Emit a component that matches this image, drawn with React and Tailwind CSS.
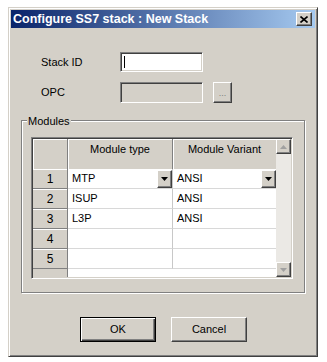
import React from 'react';

const raised =
  'border border-t-white border-l-white border-r-[#404040] border-b-[#404040] shadow-[inset_-1px_-1px_0_#808080,inset_1px_1px_0_#d4d0c8]';
const sunken =
  'border border-t-[#808080] border-l-[#808080] border-r-white border-b-white shadow-[inset_1px_1px_0_#404040,inset_-1px_-1px_0_#d4d0c8]';

const Arrow = ({ dir = 'down', color = '#000' }) => (
  <svg width="7" height="4" viewBox="0 0 7 4">
    {dir === 'down' ? (
      <path d="M0 0h7L3.5 4z" fill={color} />
    ) : (
      <path d="M0 4h7L3.5 0z" fill={color} />
    )}
  </svg>
);

const rows = [
  { n: 1, type: 'MTP', variant: 'ANSI', combo: true },
  { n: 2, type: 'ISUP', variant: 'ANSI' },
  { n: 3, type: 'L3P', variant: 'ANSI' },
  { n: 4, type: '', variant: '' },
  { n: 5, type: '', variant: '' },
];

const ComboBtn = () => (
  <div className={`w-[15px] h-[18px] bg-[#d4d0c8] flex items-center justify-center ${raised}`}>
    <Arrow />
  </div>
);

const ModulesGrid = () => (
  <div className={`w-[262px] h-[142px] bg-white flex p-[1px] ${sunken}`}>
    <div className="flex flex-col w-[243px]">
      {/* header */}
      <div className="flex h-[30px] bg-[#d4d0c8] text-[#000]">
        <div className="w-[35px] border-r border-r-[#808080] shadow-[inset_1px_1px_0_#fff]" />
        <div className="w-[105px] border-r border-r-[#808080] shadow-[inset_1px_1px_0_#fff] text-center pt-[2px]">
          Module type
        </div>
        <div className="w-[103px] shadow-[inset_1px_1px_0_#fff] text-center pt-[2px]">Module Variant</div>
      </div>
      {rows.map((r) => (
        <div key={r.n} className="flex h-[20px]">
          <div className="w-[35px] bg-[#d4d0c8] border-r border-r-[#808080] border-b border-b-[#808080] shadow-[inset_0_1px_0_#fff] flex items-center justify-center text-[12px]">
            {r.n}
          </div>
          <div className="w-[105px] border-r border-r-[#c8c8c8] border-b border-b-[#d8d8d8] flex items-center justify-between pl-[4px]">
            <span>{r.type}</span>
            {r.combo && <ComboBtn />}
          </div>
          <div className="w-[103px] border-b border-b-[#d8d8d8] flex items-center justify-between pl-[4px]">
            <span>{r.variant}</span>
            {r.combo && <ComboBtn />}
          </div>
        </div>
      ))}
      <div className="flex flex-1">
        <div className="w-[35px] bg-[#d4d0c8] border-r border-r-[#808080]" />
        <div className="flex-1 bg-white" />
      </div>
    </div>
    <div className="w-[15px] flex flex-col bg-[#ebe9e5]">
      <div className={`h-[15px] bg-[#d4d0c8] flex items-center justify-center ${raised}`}>
        <Arrow dir="up" color="#a0a0a0" />
      </div>
      <div className="flex-1" />
      <div className={`h-[15px] bg-[#d4d0c8] flex items-center justify-center ${raised}`}>
        <Arrow color="#a0a0a0" />
      </div>
    </div>
  </div>
);

export default function App() {
  return (
    <div
      className="w-[327px] h-[362px] bg-white pt-[7px] pl-[8px] text-[11px] text-black"
      style={{ fontFamily: '"Liberation Sans", Arial, sans-serif' }}
    >
      <div className="w-[310px] h-[350px] bg-[#d4d0c8] p-[2px] flex flex-col border border-t-[#d4d0c8] border-l-[#d4d0c8] border-r-[#404040] border-b-[#404040] shadow-[inset_1px_1px_0_#fff,inset_-1px_-1px_0_#808080]">
        {/* title bar */}
        <div className="h-[18px] flex items-center justify-between pl-[2px] pr-[3px] bg-[linear-gradient(to_right,#0a246a,#a6caf0)]">
          <span className="text-white font-bold text-[12.5px]">Configure SS7 stack : New Stack</span>
          <div className={`w-[16px] h-[14px] bg-[#d4d0c8] flex items-center justify-center ${raised}`}>
            <svg width="8" height="7" viewBox="0 0 8 7">
              <path d="M0.5 0.5l7 6M7.5 0.5l-7 6" stroke="#000" strokeWidth="1.6" />
            </svg>
          </div>
        </div>

        {/* Stack ID */}
        <div className="flex items-center h-[20px] mt-[24px] pl-[30px]">
          <span className="w-[79px]">Stack ID</span>
          <div className={`w-[83px] h-[20px] bg-white flex items-center pl-[3px] ${sunken}`}>
            <div className="w-[1px] h-[12px] bg-black" />
          </div>
        </div>

        {/* OPC */}
        <div className="flex items-center h-[21px] mt-[10px] pl-[30px]">
          <span className="w-[79px]">OPC</span>
          <div className={`w-[83px] h-[21px] bg-[#d4d0c8] ${sunken}`} />
          <div className={`ml-[10px] w-[19px] h-[21px] bg-[#d4d0c8] flex items-end justify-center pb-[4px] text-[9px] leading-none text-[#808080] ${raised}`}>
            ...
          </div>
        </div>

        {/* Modules group */}
        <div className="relative mt-[17px] ml-[10px] w-[284px] h-[173px] border border-[#808080] shadow-[inset_1px_1px_0_#fff,1px_1px_0_#fff]">
          <span className="absolute -top-[8px] left-[5px] px-[1px] bg-[#d4d0c8]">Modules</span>
          <div className="mt-[16px] ml-[9px]">
            <ModulesGrid />
          </div>
        </div>

        {/* buttons */}
        <div className="flex mt-[24px] pl-[69px] gap-[15px]">
          <div className="w-[76px] h-[25px] bg-[#d4d0c8] border border-black flex items-center justify-center shadow-[inset_1px_1px_0_#fff,inset_-1px_-1px_0_#404040,inset_-2px_-2px_0_#808080]">
            OK
          </div>
          <div className={`w-[76px] h-[25px] flex items-center justify-center ${raised}`}>Cancel</div>
        </div>
      </div>
    </div>
  );
}
